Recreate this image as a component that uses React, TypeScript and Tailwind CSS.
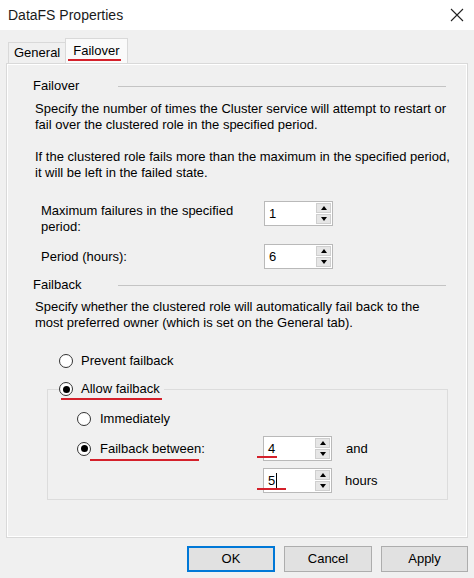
import React from 'react';

const font = { fontFamily: '"Liberation Sans", Arial, sans-serif' };

const Spinner = ({ value, caret }: { value: string; caret?: boolean }) => (
  <div className="flex w-[69px] h-[25px] border border-[#b9b9b9] bg-white">
    <div className="flex-1 flex items-center pl-[4px] text-[13px] text-black">
      {value}
      {caret && <span className="inline-block w-px h-[15px] bg-black ml-px" />}
    </div>
    <div className="w-[17px] flex flex-col gap-px p-px">
      <div className="flex-1 flex items-center justify-center bg-[#e6e6e6] border border-[#cfcfcf]">
        <span className="w-0 h-0 border-x-[3.5px] border-x-transparent border-b-[4px] border-b-black" />
      </div>
      <div className="flex-1 flex items-center justify-center bg-[#e6e6e6] border border-[#cfcfcf]">
        <span className="w-0 h-0 border-x-[3.5px] border-x-transparent border-t-[4px] border-t-black" />
      </div>
    </div>
  </div>
);

const Radio = ({ checked }: { checked?: boolean }) => (
  <span className="w-[14px] h-[14px] rounded-full border border-[#333333] bg-white flex items-center justify-center shrink-0">
    {checked && <span className="w-[7px] h-[7px] rounded-full bg-black" />}
  </span>
);

const Header = ({ title }: { title: string }) => (
  <div className="flex items-center h-[16px] pl-[25px] pr-[20px]">
    <span className="w-[85px] text-[13px]">{title}</span>
    <span className="flex-1 border-t border-[#c4c4c4]" />
  </div>
);

export default function App() {
  return (
    <div className="w-[474px] h-[578px] bg-[#f0f0f0] text-black overflow-hidden" style={font}>
      {/* Title bar */}
      <div className="h-[30px] bg-white flex items-center justify-between pl-[8px] pr-[10px]">
        <span className="text-[14px] text-[#1a1a1a]">DataFS Properties</span>
        <svg width="14" height="14" viewBox="0 0 14 14" className="text-[#222]">
          <path d="M1 1 L13 13 M13 1 L1 13" stroke="currentColor" strokeWidth="1.1" />
        </svg>
      </div>

      {/* Tabs */}
      <div className="flex items-end pl-[8px] mt-[8px] h-[25px]">
        <div className="h-[21px] px-[5px] flex items-center text-[13px] border border-b-0 border-[#d9d9d9] bg-[#f0f0f0]">
          General
        </div>
        <div className="relative h-[25px] px-[7px] flex items-center text-[13px] border border-b-0 border-[#d9d9d9] bg-[#fafafa] -ml-px">
          Failover
          <span className="absolute left-[2px] right-[6px] bottom-[2px] h-[2px] bg-[#d4202a]" />
        </div>
      </div>

      {/* Panel */}
      <div className="mx-[6px] w-[462px] h-[475px] border border-[#d9d9d9]">
        <div className="h-full border border-white text-[13px] leading-[16px]">
          <div className="pt-[13px]">
            <Header title="Failover" />
          </div>
          <p className="mt-[7px] pl-[27px]">
            Specify the number of times the Cluster service will attempt to restart or
            <br />
            fail over the clustered role in the specified period.
          </p>
          <p className="mt-[16px] pl-[27px]">
            If the clustered role fails more than the maximum in the specified period,
            <br />
            it will be left in the failed state.
          </p>

          <div className="mt-[20px] flex items-start pl-[33px]">
            <div className="w-[223px] pt-[2px]">
              Maximum failures in the specified
              <br />
              period:
            </div>
            <Spinner value="1" />
          </div>
          <div className="mt-[9px] flex items-center pl-[33px]">
            <div className="w-[223px]">Period (hours):</div>
            <Spinner value="6" />
          </div>

          <div className="mt-[8px]">
            <Header title="Failback" />
          </div>
          <p className="mt-[6px] pl-[27px]">
            Specify whether the clustered role will automatically fail back to the
            <br />
            most preferred owner (which is set on the General tab).
          </p>

          <div className="mt-[22px] pl-[51px] flex items-center gap-[8px]">
            <Radio />
            <span>Prevent failback</span>
          </div>

          <fieldset className="mt-[12px] ml-[39px] mr-[18px] border border-[#dcdcdc] pl-[29px] pr-[12px] pb-[6px]">
            <legend className="-ml-[18px] pr-[4px] flex items-center gap-[8px]">
              <Radio checked />
              <span className="relative">
                Allow failback
                <span className="absolute -left-[20px] -right-[2px] -bottom-[3px] h-[2px] bg-[#d4202a]" />
              </span>
            </legend>
            <div className="mt-[14px] flex items-center gap-[9px]">
              <Radio />
              <span>Immediately</span>
            </div>
            <div className="mt-[9px] flex items-center">
              <div className="w-[186px] flex items-center gap-[9px]">
                <Radio checked />
                <span className="relative">
                  Failback between:
                  <span className="absolute -left-[10px] right-[6px] -bottom-[4px] h-[2px] bg-[#d4202a]" />
                </span>
              </div>
              <div className="relative">
                <Spinner value="4" />
                <span className="absolute -left-[6px] w-[20px] bottom-[3px] h-[2px] bg-[#d4202a]" />
              </div>
              <span className="ml-[14px]">and</span>
            </div>
            <div className="mt-[7px] flex items-center pl-[186px]">
              <div className="relative">
                <Spinner value="5" caret />
                <span className="absolute -left-[6px] w-[29px] bottom-[3px] h-[2px] bg-[#d4202a]" />
              </div>
              <span className="ml-[13px]">hours</span>
            </div>
          </fieldset>
        </div>
      </div>

      {/* Buttons */}
      <div className="flex justify-end gap-[9px] pr-[6px] mt-[8px]">
        <button className="w-[88px] h-[26px] bg-[#e1e1e1] border-2 border-[#0078d7] text-[13px]">OK</button>
        <button className="w-[88px] h-[26px] bg-[#e1e1e1] border border-[#adadad] text-[13px]">Cancel</button>
        <button className="w-[87px] h-[26px] bg-[#e1e1e1] border border-[#adadad] text-[13px]">Apply</button>
      </div>
    </div>
  );
}
